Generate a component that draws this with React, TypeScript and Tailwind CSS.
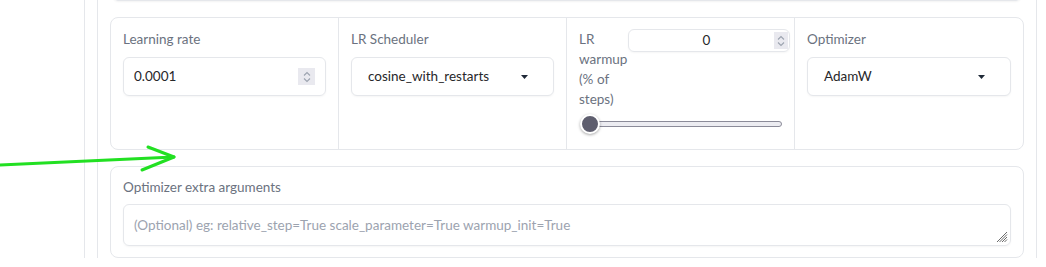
import { useState } from 'react';

const font = { fontFamily: 'Lato, "Open Sans", sans-serif' };

const Spinner = ({ small }: { small?: boolean }) => (
  <div
    className={`flex flex-col items-center justify-center bg-[#e9e9ef] ${small ? 'h-[17px] w-[14px]' : 'h-[17px] w-[17px]'}`}
  >
    <svg width="8" height="12" viewBox="0 0 8 12" fill="none" stroke="#9ca3af" strokeWidth="1.1">
      <path d="M1 4.5 L4 1.5 L7 4.5" />
      <path d="M1 7.5 L4 10.5 L7 7.5" />
    </svg>
  </div>
);

const Caret = () => (
  <svg width="7" height="4" viewBox="0 0 7 4">
    <path d="M0 0 L7 0 L3.5 4 Z" fill="#1f2937" />
  </svg>
);

const Label = ({ children }: { children: React.ReactNode }) => (
  <div className="mb-2 text-[13.5px] leading-[20px] text-[#6b7280]">{children}</div>
);

const Dropdown = ({ value }: { value: string }) => (
  <div className="flex h-[39px] items-center justify-between rounded-md border border-[#e5e7eb] bg-white pl-4 pr-[25px] shadow-[0_1px_2px_rgba(0,0,0,0.04)]">
    <span className="text-[13.5px] text-[#27272a]">{value}</span>
    <Caret />
  </div>
);

const App = () => {
  const [lr] = useState('0.0001');

  return (
    <div className="relative h-[267px] w-full overflow-hidden bg-white" style={font}>
      <div className="ml-[84px] h-full border-l border-[#e5e7eb] pl-[12px]">
        <div className="h-full w-[940px] border-x border-[#e5e7eb] px-[12px]">
          {/* previous block edge */}
          <div className="mx-[3px] -mt-[9px] h-[10px] rounded-lg border border-[#e5e7eb] shadow-[0_1px_2px_rgba(0,0,0,0.05)]" />

          {/* Learning params row */}
          <div className="mt-[16px] grid grid-cols-4 divide-x divide-[#e5e7eb] rounded-lg border border-[#e5e7eb]">
            <div className="px-3 pt-[11px] pb-[15px]">
              <Label>Learning rate</Label>
              <div className="flex h-[39px] items-center justify-between rounded-md border border-[#e5e7eb] pl-[10px] pr-[10px] shadow-[0_1px_2px_rgba(0,0,0,0.04)]">
                <span className="text-[13.5px] text-[#27272a]">{lr}</span>
                <Spinner />
              </div>
            </div>

            <div className="px-3 pt-[11px] pb-[15px]">
              <Label>LR Scheduler</Label>
              <Dropdown value="cosine_with_restarts" />
            </div>

            <div className="px-3 pt-[11px] pb-[15px]">
              <div className="flex items-start">
                <div className="w-[49px] shrink-0 text-[13.5px] leading-[20px] text-[#6b7280]">
                  LR warmup (% of steps)
                </div>
                <div className="-mr-2 flex h-[23px] flex-1 items-center rounded-md border border-[#e5e7eb] pr-[1px] shadow-[0_1px_2px_rgba(0,0,0,0.04)]">
                  <span className="flex-1 pl-[10px] text-center text-[13.5px] text-[#27272a]">0</span>
                  <Spinner small />
                </div>
              </div>
              <div className="relative mt-[5px] flex h-[20px] items-center pl-[4px]">
                <div className="h-[6px] w-full rounded-full border border-[#8b8b99] bg-[#ececf1]" />
                <div className="absolute left-[1px] top-0 h-[20px] w-[20px] rounded-full border-2 border-white bg-[#5e5e6e] shadow-[0_1px_3px_rgba(0,0,0,0.35)]" />
              </div>
            </div>

            <div className="px-3 pt-[11px] pb-[15px]">
              <Label>Optimizer</Label>
              <Dropdown value="AdamW" />
            </div>
          </div>

          {/* Extra arguments */}
          <div className="mt-[16px] rounded-lg border border-[#e5e7eb] px-3 pt-[10px] pb-[11px]">
            <div className="mb-[7px] text-[13.5px] leading-[20px] text-[#6b7280]">Optimizer extra arguments</div>
            <div className="relative h-[42px] rounded-md border border-[#e5e7eb] shadow-[0_1px_2px_rgba(0,0,0,0.04)]">
              <div className="flex h-full items-center pl-[10px] text-[13.5px] text-[#9ca3af]">
                (Optional) eg: relative_step=True scale_parameter=True warmup_init=True
              </div>
              <svg className="absolute bottom-[2px] right-[2px]" width="13" height="13" viewBox="0 0 13 13" stroke="#6b6b6b" strokeWidth="1">
                <path d="M12 2 L2 12" />
                <path d="M12 4.5 L4.5 12" />
                <path d="M12 7 L7 12" />
                <path d="M12 9.5 L9.5 12" />
              </svg>
            </div>
          </div>
        </div>
      </div>

      {/* annotation arrow */}
      <svg className="pointer-events-none absolute left-0 top-0" width="200" height="200" fill="none" stroke="#22e022" strokeWidth="3" strokeLinecap="round" strokeLinejoin="round">
        <path d="M0 165 C 60 162, 120 159, 174 157" />
        <path d="M148 147 L174 157 L142 170" />
      </svg>
    </div>
  );
};

export default App;
